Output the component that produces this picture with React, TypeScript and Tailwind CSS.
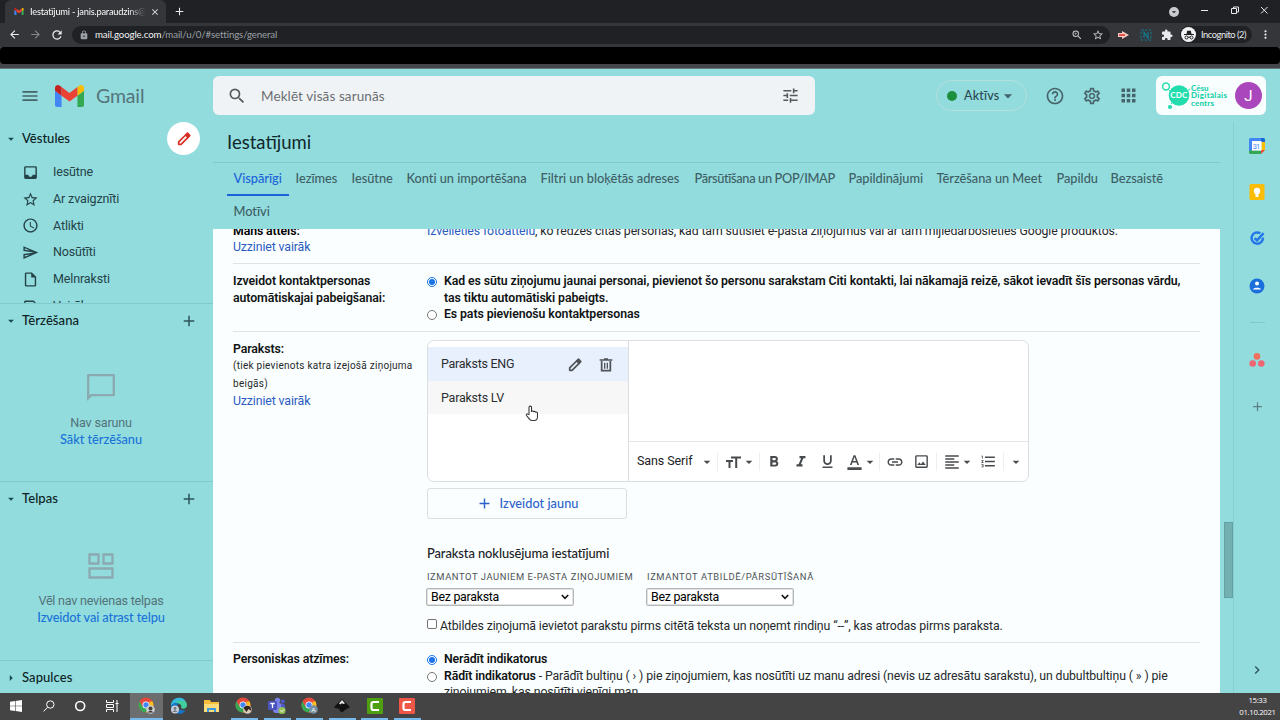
import React from "react";
import {
  MdMenu, MdSearch, MdTune, MdHelpOutline, MdOutlineSettings, MdApps, MdArrowDropDown, MdArrowRight,
  MdInbox, MdStarOutline, MdAccessTime, MdOutlineSend, MdOutlineInsertDriveFile, MdAdd,
  MdFormatBold, MdFormatItalic, MdFormatUnderlined,
  MdFormatColorText, MdLink, MdOutlineImage, MdFormatAlignLeft, MdFormatListNumbered, MdChevronRight,
  MdArrowBack, MdArrowForward, MdRefresh, MdLock, MdClose, MdZoomIn, MdExtension, MdMoreVert, MdLabelOutline,
} from "react-icons/md";

const roboto = "font-[Roboto,'Liberation_Sans',sans-serif]";
const product = "font-[Lato,'Open_Sans',sans-serif]";
const system = "font-[Lato,'Noto_Sans',sans-serif]";

function GmailMark({ className }: { className: string }) {
  return (
    <svg viewBox="52 42 88 66" className={className}>
      <path fill="#4285f4" d="M58 108h14V74L52 59v43c0 3.32 2.69 6 6 6" />
      <path fill="#34a853" d="M120 108h14c3.32 0 6-2.69 6-6V59l-20 15" />
      <path fill="#fbbc04" d="M120 48v26l20-15v-8c0-7.42-8.47-11.65-14.4-7.2" />
      <path fill="#ea4335" d="M72 74V48l24 18 24-18v26L96 92" />
      <path fill="#c5221f" d="M52 51v8l20 15V48l-5.6-4.2c-5.94-4.45-14.4-.22-14.4 7.2" />
    </svg>
  );
}

function Pencil({ className }: { className: string }) {
  return (
    <svg viewBox="0 0 24 24" className={className} fill="none" stroke="currentColor" strokeWidth="2.500" strokeLinejoin="round">
      <path d="M4 20v-3.600L15.200 5.200l3.600 3.600L7.600 20z" />
      <path d="M14.500 6l2.800-2.800 3.500 3.500L18 9.500z" fill="currentColor" />
    </svg>
  );
}

function Trash({ className }: { className: string }) {
  return (
    <svg viewBox="0 0 24 24" className={className} fill="none" stroke="currentColor" strokeWidth="2.600">
      <path d="M5.500 6v14.500h13V6M2.500 4.500h19M9 3h6" />
      <path d="M10 8.500v9M14 8.500v9" strokeWidth="2" />
    </svg>
  );
}

function TabStrip() {
  return (
    <div className="flex h-[23px] shrink-0 items-stretch bg-[#202124] text-[#e8eaed]">
      <div className="ml-[5px] flex w-[161px] items-center rounded-t-[6px] bg-[#35363a] pl-[9px]">
        <GmailMark className="h-[7px] w-[10px]" />
        <span className="ml-[6px] w-[116px] overflow-hidden whitespace-nowrap bg-gradient-to-r from-white from-85% to-transparent bg-clip-text pt-px text-[9.300px] font-medium tracking-[-0.240px] text-transparent">
          Iestatījumi - janis.paraudzins@cdc
        </span>
        <MdClose className="ml-[4px] size-[10px]" />
      </div>
      <MdAdd className="ml-[7px] mt-[5px] size-[13px]" />
      <div className="ml-auto flex items-center">
        <span className="mr-[20px] flex size-[10px] items-center justify-center rounded-full bg-[#c8cacd]">
          <MdArrowDropDown className="size-[10px] text-[#202124]" />
        </span>
        <svg viewBox="0 0 80 12" className="mr-[1px] h-[12px] w-[80px] -translate-y-px" fill="none" stroke="#e8eaed">
          <path d="M2 5.500h7M32.500 3.500h5v5h-5zM34.500 3.500v-1.500h5v5h-1.500M62 2l6.500 6.500M68.500 2L62 8.500" />
        </svg>
      </div>
    </div>
  );
}

function AddressBar() {
  return (
    <div className="flex h-[24px] shrink-0 items-center bg-[#35363a] pb-px text-[#e8eaed]">
      <MdArrowBack className="ml-[8px] size-[13px]" />
      <MdArrowForward className="ml-[8px] size-[13px] text-[#85878b]" />
      <MdRefresh className="ml-[8px] size-[14px]" />
      <div className="ml-[8px] flex h-[18px] w-[1038px] items-center rounded-full bg-[#202124] pl-[7px] pr-[6px]">
        <MdLock className="size-[10px] text-[#9aa0a6]" />
        <span className="ml-[6px] text-[9.700px] tracking-[-0.130px] text-[#9aa0a6]">
          <span className="text-[#f1f3f4]">mail.google.com</span>/mail/u/0/#settings/general
        </span>
        <MdZoomIn className="ml-auto size-[12px] text-[#c8cacd]" />
        <MdStarOutline className="ml-[9px] size-[12px] text-[#c8cacd]" />
      </div>
      <svg viewBox="0 0 12 10" className="ml-[8px] h-[10px] w-[12px]">
        <path d="M0 3h4V1l7 4-7 4V7H0z" fill="#f7c9c5" />
        <path d="M1 5h6" stroke="#e35549" strokeWidth="2" />
      </svg>
      <svg viewBox="0 0 12 12" className="ml-[10px] size-[12px]" fill="none" stroke="#12798c">
        <path d="M1 1h10v10H1z" strokeDasharray="2.500 1.500" />
        <path d="M4 9V3l4 6V3" strokeWidth="1.300" />
      </svg>
      <MdExtension className="ml-[9px] size-[12px]" />
      <div className="ml-[7px] flex h-[17px] w-[72px] items-center rounded-full bg-[#202124]">
        <span className="ml-px flex size-[15px] items-center justify-center rounded-full bg-[#f1f3f4]">
          <svg viewBox="0 0 12 12" className="size-[12px]" fill="none" stroke="#202124">
            <path d="M3.500 5L4.200 1.800h3.600L8.500 5z" fill="#202124" stroke="none" />
            <path d="M1 5.500h10" />
            <circle cx="3.500" cy="8.500" r="1.500" />
            <circle cx="8.500" cy="8.500" r="1.500" />
            <path d="M5 8.200h2" />
          </svg>
        </span>
        <span className="ml-[5px] whitespace-nowrap text-[9.300px] tracking-[-0.450px]">Incognito (2)</span>
      </div>
      <MdMoreVert className="ml-[7px] size-[13px]" />
    </div>
  );
}

function CompanyLogo() {
  return (
    <svg viewBox="0 0 68 32" className="h-[32px] w-[68px] font-[Lato,sans-serif] font-black">
      <g fill="none" stroke="#27dcae">
        <circle cx="5" cy="6.500" r="3.400" strokeWidth="1.500" />
        <path d="M7 9l3 3M10 24l3-3M26 11l3-2" />
      </g>
      <circle cx="18" cy="15.500" r="10.300" fill="#22dcae" />
      <circle cx="9" cy="27" r="2.100" fill="#22dcae" />
      <text x="9.300" y="18.400" fontSize="8" textLength="17" fill="#effffb">CDC</text>
      <g fill="#20d0a8" fontSize="7.900">
        <text x="30" y="10.500" textLength="17.500">Cēsu</text>
        <text x="30" y="18" textLength="36">Digitālais</text>
        <text x="30" y="25.500" textLength="23">centrs</text>
      </g>
    </svg>
  );
}

function Header() {
  return (
    <header className="flex h-[53px] shrink-0 items-center text-[#47646a]">
      <MdMenu className="ml-[20px] size-[20px]" />
      <GmailMark className="ml-[15px] h-[22px] w-[29px]" />
      <span className="ml-[12px] w-[48px] font-[Lato,sans-serif] text-[19.5px] tracking-[-0.15px] text-[#55757b]">Gmail</span>
      <div className="ml-[69px] flex h-[39px] w-[602px] items-center rounded-[6px] bg-[#f0f3f5] text-[#55595d]">
        <MdSearch className="ml-[14px] size-[20px]" />
        <span className={`ml-[14px] pt-px text-[13.5px] tracking-[0.1px] text-[#6b6f73] ${product}`}>Meklēt visās sarunās</span>
        <MdTune className="ml-auto mr-[15px] size-[19px]" />
      </div>
      <div className="ml-[121px] flex h-[31px] w-[91px] items-center rounded-full border border-[#b5dfe0]">
        <span className="ml-[10px] size-[10px] rounded-full bg-[#1e8e3e]" />
        <span className={`ml-[7px] pt-px text-[12.5px] font-medium tracking-[0.2px] text-[#294a50] ${product}`}>Aktīvs</span>
        <MdArrowDropDown className="ml-[-1px] size-[20px]" />
      </div>
      <MdHelpOutline className="ml-[18px] size-[20px]" />
      <MdOutlineSettings className="ml-[17px] size-[20px]" />
      <MdApps className="ml-[16px] size-[21px]" />
      <div className="ml-[17px] flex h-[39px] w-[110px] items-center rounded-[6px] bg-[#f8fdfd] pl-[5px]">
        <CompanyLogo />
        <span className={`ml-[6px] flex size-[27px] items-center justify-center rounded-full bg-[#ab47bc] pt-px text-[15px] text-white ${roboto}`}>J</span>
      </div>
    </header>
  );
}

const folders = [
  { label: "Iesūtne", icon: MdInbox },
  { label: "Ar zvaigznīti", icon: MdStarOutline },
  { label: "Atlikti", icon: MdAccessTime },
  { label: "Nosūtīti", icon: MdOutlineSend },
  { label: "Melnraksti", icon: MdOutlineInsertDriveFile },
  { label: "Vairāk", icon: MdLabelOutline },
];

function SectionTitle({ label, closed, add }: { label: string; closed?: boolean; add?: boolean }) {
  const Arrow = closed ? MdArrowRight : MdArrowDropDown;
  return (
    <div className="flex h-[33px] items-center">
      <Arrow className="ml-[4px] size-[14px] text-[#174a4e]" />
      <span className={`ml-[4px] text-[13px] font-medium tracking-[0.08px] text-[#0e2224] ${product}`}>{label}</span>
      {add && <MdAdd className="ml-auto mr-[15px] size-[18px] text-[#2b5459]" />}
    </div>
  );
}

function Sidebar() {
  return (
    <aside className={`flex w-[213px] shrink-0 flex-col text-[12.600px] ${roboto}`}>
      <div className="h-[181px] shrink-0 overflow-hidden">
        <div className="mb-[4px] flex h-[33px] items-center">
          <MdArrowDropDown className="ml-[4px] size-[14px] text-[#174a4e]" />
          <span className={`ml-[4px] text-[13px] font-medium text-[#0e2224] ${product}`}>Vēstules</span>
          <span className="ml-auto mr-[13px] flex size-[33px] items-center justify-center rounded-full bg-white">
            <Pencil className="size-[16px] text-[#d93025]" />
          </span>
        </div>
        {folders.map(({ label, icon: Icon }) => (
          <div key={label} className="flex h-[26.7px] items-center text-[#244347]">
            <Icon className="ml-[22px] size-[17px]" />
            <span className="ml-[14px] pt-[0.600px] text-[12.500px] tracking-[-0.130px]">{label}</span>
          </div>
        ))}
      </div>
      <div className="h-[178px] shrink-0 border-t border-[#81cacc]">
        <SectionTitle label="Tērzēšana" add />
        <div className="mr-[11px] flex flex-col items-center pt-[36px] leading-4">
          <svg viewBox="0 0 28 28" className="size-[28px]" fill="none" stroke="#8ba9b0" strokeWidth="2.300" strokeLinejoin="round">
            <path d="M1.200 25V2.200h25.600v20H4z" />
            <path d="M0 22v6l6-6z" fill="#8ba9b0" stroke="none" />
          </svg>
          <span className="mt-[14px] tracking-[-0.2px] text-[#527378]">Nav sarunu</span>
          <span className={`text-[12.800px] font-medium tracking-[-0.03px] text-[#1a73d8] ${product}`}>Sākt tērzēšanu</span>
        </div>
      </div>
      <div className="h-[179px] shrink-0 border-t border-[#81cacc]">
        <SectionTitle label="Telpas" add />
        <div className="mr-[11px] flex flex-col items-center pt-[38px] leading-4">
          <svg viewBox="0 0 26 26" className="size-[26px]" fill="none" stroke="#8ba9b0" strokeWidth="2.300">
            <path d="M1.500 1.500h9v9h-9zM15.500 1.500h9v9h-9zM1.500 15.500h23v9h-23z" />
          </svg>
          <span className="mt-[14px] tracking-[-0.240px] text-[#527378]">Vēl nav nevienas telpas</span>
          <span className={`text-[12.800px] font-medium tracking-[-0.14px] text-[#1a73d8] ${product}`}>Izveidot vai atrast telpu</span>
        </div>
      </div>
      <div className="border-t border-[#81cacc]">
        <SectionTitle label="Sapulces" closed />
      </div>
    </aside>
  );
}

const tabs = [
  ["Vispārīgi", "w-[62px] border-b-2 border-[#1a63d8] text-[#1a63d8]"],
  ["Iezīmes", "w-[56px] pb-[2px]"],
  ["Iesūtne", "w-[55px] pb-[2px]"],
  ["Konti un importēšana", "w-[134px] pb-[2px]"],
  ["Filtri un bloķētās adreses", "w-[154px] pb-[2px]"],
  ["Pārsūtīšana un POP/IMAP", "w-[154px] pb-[2px] tracking-[-0.35px]"],
  ["Papildinājumi", "w-[88px] pb-[2px] tracking-[-0.05px]"],
  ["Tērzēšana un Meet", "w-[120px] pb-[2px]"],
  ["Papildu", "w-[54px] pb-[2px]"],
  ["Bezsaistē", "w-[68px] pb-[2px]"],
  ["Motīvi", "w-[50px] pb-[2px]"],
];

function Radio({ checked }: { checked?: boolean }) {
  return (
    <span className={`mt-[4px] flex size-[10px] shrink-0 items-center justify-center rounded-full border bg-white ${checked ? "border-[#1a73e8]" : "border-[#767676]"}`}>
      {checked && <span className="size-[6px] rounded-full bg-[#1a73e8]" />}
    </span>
  );
}

function Option({ checked, children }: { checked?: boolean; children: React.ReactNode }) {
  return (
    <div className="flex gap-[7px]">
      <Radio checked={checked} />
      <div className="whitespace-nowrap">{children}</div>
    </div>
  );
}

function Select() {
  return (
    <span className="-ml-px flex h-[18px] w-[148px] items-center rounded-[2px] border border-[#b4b7b8] bg-white pl-[4px] text-[12.400px] tracking-[-0.28px] text-black shadow-[inset_0_0_0_1px_#e0e2e3]">
      Bez paraksta
      <svg viewBox="0 0 8 6" className="ml-auto mr-[4px] h-[6px] w-[8px]" fill="none" stroke="#111" strokeWidth="1.600">
        <path d="M.8 1L4 4.300 7.200 1" />
      </svg>
    </span>
  );
}

function Caret({ className }: { className: string }) {
  return <MdArrowDropDown className={`size-[16px] shrink-0 ${className}`} />;
}

function Divider({ className }: { className: string }) {
  return <span className={`h-[18px] w-px shrink-0 bg-[#eceef0] ${className}`} />;
}

function SignatureEditor() {
  return (
    <div className="flex h-[142px] w-[602px] overflow-hidden rounded-[7px] border border-[#dcdfe2] bg-white text-[12.500px]">
      <div className="w-[201px] border-r border-[#dcdfe2] pt-[6px] text-[#2b2e31]">
        <div className="flex h-[34px] items-center bg-[#e8f0fe] pl-[13px] pt-px tracking-[-0.26px]">
          Paraksts ENG
          <Pencil className="ml-auto size-[16px] text-[#505458]" />
          <Trash className="ml-[15px] mr-[14px] size-[16px] text-[#505458]" />
        </div>
        <div className="flex h-[33px] items-center bg-[#f7f7f7] pl-[13px] pt-px tracking-[-0.23px]">Paraksts LV</div>
      </div>
      <div className="flex flex-1 flex-col">
        <div className="flex-1" />
        <div className="flex h-[40px] items-center border-t border-[#e3e5e8] pl-[8px] text-[#484b4e]">
          <span className="w-[55px] whitespace-nowrap tracking-[-0.09px] text-[#202124]">Sans Serif</span>
          <Caret className="ml-[7px]" />
          <Divider className="ml-[2px]" />
          <svg viewBox="0 0 15 12" className="ml-[8px] h-[12px] w-[15px]" fill="none" stroke="#484b4e" strokeWidth="2">
            <path d="M5 1.500h10M10.200 1.500V12M0 5h7M3.500 5v7" />
          </svg>
          <Caret className="ml-0" />
          <Divider className="ml-[2px]" />
          <MdFormatBold className="ml-[5px] size-[18px] shrink-0" />
          <MdFormatItalic className="ml-[9px] size-[18px] shrink-0" />
          <MdFormatUnderlined className="ml-[9px] size-[17px] shrink-0" />
          <MdFormatColorText className="ml-[10px] size-[17px] shrink-0" />
          <Caret className="ml-[-1px]" />
          <Divider className="ml-[1px]" />
          <MdLink className="ml-[6px] size-[18px] shrink-0" />
          <MdOutlineImage className="ml-[9px] size-[17px] shrink-0" />
          <Divider className="ml-[6px]" />
          <MdFormatAlignLeft className="ml-[6px] size-[18px] shrink-0" />
          <Caret className="ml-[-2px]" />
          <MdFormatListNumbered className="ml-[5px] size-[17px] shrink-0" />
          <Divider className="ml-[6px]" />
          <Caret className="ml-[4px]" />
        </div>
      </div>
    </div>
  );
}

function Settings() {
  return (
    <main className="flex w-[1007px] shrink-0 flex-col">
      <h1 className={`flex h-[41px] shrink-0 items-center border-b border-[#81c8ca] pl-[14px] pt-px text-[18.500px] text-[#10282b] ${product}`}>Iestatījumi</h1>
      <nav className={`flex h-[66px] shrink-0 flex-wrap content-start pl-[14px] text-[12.800px] font-medium tracking-[-0.030px] text-[#3f6065] ${product}`}>
        {tabs.map(([label, style]) => (
          <span key={label} className={`flex h-[33px] items-center whitespace-nowrap pl-[6.500px] ${style}`}>{label}</span>
        ))}
      </nav>
      <div className={`flex-1 overflow-hidden bg-[#fafefe] px-[20px] text-[12.300px] leading-[16.600px] tracking-[-0.11px] text-[#25292c] ${roboto}`}>
        <section className="-mt-[6.500px] flex h-[41.500px] border-b border-[#dfe3e4]">
          <div className="w-[194px] shrink-0">
            <b className="font-semibold text-black">Mans attēls:</b>
            <div className="text-[#2a5bc0]">Uzziniet vairāk</div>
          </div>
          <div className="whitespace-nowrap">
            <span className="text-[#2a5bc0]">Izvēlieties fotoattēlu</span>, ko redzēs citas personas, kad tām sūtīsiet e-pasta ziņojumus vai ar tām mijiedarbosieties Google produktos.
          </div>
        </section>
        <section className="flex h-[68px] border-b border-[#dfe3e4] pt-[9px] font-semibold tracking-[-0.09px] text-[#101314]">
          <div className="w-[194px] shrink-0">Izveidot kontaktpersonas<br />automātiskajai pabeigšanai:</div>
          <div>
            <Option checked>
              Kad es sūtu ziņojumu jaunai personai, pievienot šo personu sarakstam Citi kontakti, lai nākamajā reizē, sākot ievadīt šīs personas vārdu,
              <br />tas tiktu automātiski pabeigts.
            </Option>
            <Option>Es pats pievienošu kontaktpersonas</Option>
          </div>
        </section>
        <section className="flex h-[311px] border-b border-[#dfe3e4] pt-[8px]">
          <div className="w-[194px] shrink-0 pt-[0.700px]">
            <b className="font-semibold text-[#101314]">Paraksts:</b>
            <div className="whitespace-nowrap text-[10px] leading-[18px] tracking-[0.260px]">(tiek pievienots katra izejošā ziņojuma<br />beigās)</div>
            <div className="text-[#2a5bc0]">Uzziniet vairāk</div>
          </div>
          <div className="relative">
            <SignatureEditor />
            <button className={`mt-[6px] flex h-[31px] w-[200px] items-center justify-center gap-[7px] rounded-[3px] border border-[#dcdfe2] text-[12.700px] font-medium tracking-[0.05px] text-[#2a62c9] ${product}`}>
              <MdAdd className="size-[17px]" />
              <span>Izveidot jaunu</span>
            </button>
            <h2 className={`mt-[26px] text-[12.900px] font-medium tracking-[-0.080px] text-[#202124] ${product}`}>Paraksta noklusējuma iestatījumi</h2>
            <div className="mt-[7px] flex">
              <div className="w-[220px]">
                <div className="mb-[3px] whitespace-nowrap text-[9.400px] tracking-[0.570px] text-[#4e5256]">IZMANTOT JAUNIEM E-PASTA ZIŅOJUMIEM</div>
                <Select />
              </div>
              <div>
                <div className="mb-[3px] whitespace-nowrap text-[9.400px] tracking-[0.6px] text-[#4e5256]">IZMANTOT ATBILDĒ/PĀRSŪTĪŠANĀ</div>
                <Select />
              </div>
            </div>
            <div className="mt-[11px] flex">
              <span className="mr-[3px] mt-[2px] size-[10px] rounded-[2px] border border-[#767676] bg-white" />
              <span className="whitespace-nowrap pt-[0.500px]">Atbildes ziņojumā ievietot parakstu pirms citētā teksta un noņemt rindiņu “--”, kas atrodas pirms paraksta.</span>
            </div>
            <svg viewBox="0 0 24 24" className="absolute left-[96px] top-[64px] size-[18px]" fill="#fff" stroke="#333" strokeWidth="1.400" strokeLinejoin="round">
              <path d="M8 14V4.500a1.700 1.700 0 013.400 0V10c.4-1 2.500-1 3 .3.700-.8 2.300-.5 2.600.7.900-.6 2.300 0 2.300 1.300V17c0 3-1.300 5-4.300 5h-3c-2 0-3-1-4-2.500L4.500 15c-.8-1.200.8-2.600 2-1.500z" />
            </svg>
          </div>
        </section>
        <section className="flex pt-[8px]">
          <div className="w-[194px] shrink-0 font-semibold text-[#101314]">Personiskas atzīmes:</div>
          <div>
            <Option checked><b className="font-semibold text-[#101314]">Nerādīt indikatorus</b></Option>
            <Option>
              <b className="font-semibold text-[#101314]">Rādīt indikatorus</b> - Parādīt bultiņu ( › ) pie ziņojumiem, kas nosūtīti uz manu adresi (nevis uz adresātu sarakstu), un dubultbultiņu ( » ) pie
              <br />ziņojumiem, kas nosūtīti vienīgi man.
            </Option>
          </div>
        </section>
      </div>
    </main>
  );
}

function SidePanel() {
  return (
    <aside className="flex w-[47px] shrink-0 flex-col items-center border-l border-[#84cfd1]">
      <svg viewBox="0 0 16 16" className="mt-[16px] size-[16px]">
        <path d="M1 0h11v3H3v10H0V1z" fill="#4285f4" />
        <path d="M12 0h3l1 1v3h-4z" fill="#1967d2" />
        <path d="M12.500 4H16v8h-3.500z" fill="#fbbc04" />
        <path d="M0 12.500h12V16H1l-1-1z" fill="#34a853" />
        <path d="M12 12h4l-4 4z" fill="#ea4335" />
        <path d="M3 3h9.500v9.500H3z" fill="#fff" />
        <text x="3.800" y="10.700" fontSize="7.500" textLength="7.500" fill="#4285f4" fontFamily="Roboto">31</text>
      </svg>
      <svg viewBox="0 0 16 16" className="mt-[30px] size-[16px]">
        <rect width="15" height="16" x=".5" rx="1.500" fill="#fbbc04" />
        <circle cx="8" cy="7" r="3.200" fill="#fff" />
        <path d="M6.500 9h3v4h-3z" fill="#fff" />
      </svg>
      <svg viewBox="0 0 16 16" className="mt-[31px] size-[15px]" fill="none" stroke="#2377e8" strokeWidth="2.600">
        <path d="M11 2.500A6 6 0 1 0 13.700 7" />
        <path d="M5 7.500L7.500 10 14.500 2.300" />
      </svg>
      <svg viewBox="0 0 16 16" className="mt-[32px] size-[16px]">
        <circle cx="8" cy="8" r="7.500" fill="#1a6fdc" />
        <circle cx="8" cy="5.600" r="2" fill="#fff" />
        <path d="M4 11.500c0-2.500 8-2.500 8 0z" fill="#fff" />
      </svg>
      <span className="mt-[28px] h-px w-[15px] bg-[#81c8ca]" />
      <svg viewBox="0 0 16 16" className="mt-[29px] size-[16px]" fill="#ee6672">
        <circle cx="8" cy="4.400" r="3.300" fill="#f0705f" />
        <circle cx="3.700" cy="11.500" r="3.300" />
        <circle cx="12.300" cy="11.500" r="3.300" />
      </svg>
      <MdAdd className="mt-[31px] size-[15px] text-[#5e7f85]" />
      <MdChevronRight className="mb-[15px] mt-auto size-[16px] text-[#2f5459]" />
    </aside>
  );
}

function Chrome({ children }: { children?: React.ReactNode }) {
  return (
    <svg viewBox="0 0 18 18" className="size-[18px]">
      <circle cx="8" cy="8" r="7.500" fill="#e5493b" />
      <path d="M1.500 4.200A7.500 7.500 0 0 0 8 15.500L11.200 10H4.800z" fill="#35a853" />
      <path d="M14.600 4.600A7.500 7.500 0 0 1 8 15.500L11.500 9.500V4.600z" fill="#fbc116" />
      <circle cx="8" cy="8" r="3.500" fill="#fff" />
      <circle cx="8" cy="8" r="2.700" fill="#4285f4" />
      {children}
    </svg>
  );
}

function Camtasia({ fill }: { fill: string }) {
  return (
    <svg viewBox="0 0 16 16" className="size-[16px]">
      <rect width="16" height="16" rx="1" fill={fill} />
      <path d="M12 4H6.500Q4.500 4 4.500 6v4q0 2 2 2H12" fill="none" stroke="#fff" strokeWidth="2.200" />
    </svg>
  );
}

function TaskItem({ children, open, active }: { children: React.ReactNode; open?: boolean; active?: boolean }) {
  return (
    <div className={`flex w-[32.600px] flex-col items-center ${active ? "bg-[#6c6d6e]" : ""}`}>
      <span className="flex h-[25px] items-center justify-center pt-px">{children}</span>
      <span className={`h-[2px] ${active ? "w-full" : "w-[27px]"} ${open ? "bg-[#76b9ed]" : ""}`} />
    </div>
  );
}

function Taskbar() {
  return (
    <footer className="flex h-[27px] shrink-0 bg-[#444445] text-white">
      <TaskItem>
        <svg viewBox="0 0 12 12" className="size-[12px]" fill="#fff">
          <path d="M0 1.700l5-.7v4.700H0zM5.600.9L12 0v5.700H5.600zM0 6.300h5V11l-5-.7zM5.600 6.300H12V12l-6.400-.9z" />
        </svg>
      </TaskItem>
      <TaskItem>
        <svg viewBox="0 0 12 12" className="size-[12px]" fill="none" stroke="#fff"><circle cx="7.300" cy="4.500" r="3.700" /><path d="M4.500 7.300L.6 11.400" /></svg>
      </TaskItem>
      <TaskItem><svg viewBox="0 0 12 12" className="size-[12px]" fill="none" stroke="#fff" strokeWidth="1.600"><circle cx="5.200" cy="6" r="4.500" /></svg></TaskItem>
      <TaskItem>
        <svg viewBox="0 0 13 12" className="mr-[3px] h-[12px] w-[13px]" fill="none" stroke="#fff"><path d="M.5 0v2.500h7V0M.5 12V9.500h7V12M.5 4.500h7v3h-7zM11 0v12M9.500 3.500h3" /></svg>
      </TaskItem>
      <TaskItem open active>
        <Chrome><circle cx="12.500" cy="12.500" r="4.300" fill="#c9ced0" /><circle cx="12.500" cy="11.500" r="2" fill="#4a4038" /><path d="M9.500 15.500q3-3.500 6 0z" fill="#333" /></Chrome>
      </TaskItem>
      <TaskItem>
        <svg viewBox="0 0 18 18" className="size-[18px]">
          <path d="M1 9a8 8 0 0 1 16-.5c0 3-4 4-6 2.500 1.500-3-1.500-5-4.500-4.500S1.500 9 1 9z" fill="#41cf9d" />
          <path d="M1 9a8 8 0 0 1 15-4C12 2 5 3.500 1 9z" fill="#36b8e5" />
          <path d="M1 9c1-3 5-4.500 8-2-4 1-2.500 7 6.500 6.500A8 8 0 0 1 1 9z" fill="#1673c8" />
          <circle cx="5" cy="12.500" r="4" fill="#c5cdd5" /><circle cx="5" cy="11.500" r="1.400" fill="#6c7884" /><path d="M2.500 15q2.500-3.500 5 0z" fill="#6c7884" />
        </svg>
      </TaskItem>
      <TaskItem>
        <svg viewBox="0 0 16 14" className="h-[14px] w-[16px]"><path d="M0 1h6l1 2h8v10H0z" fill="#f6bd3a" /><path d="M0 5h15v8H0z" fill="#fddc7c" /><path d="M3 13V9h9v4h-2v-2H5v2z" fill="#3f9be0" /></svg>
      </TaskItem>
      <TaskItem open>
        <Chrome><circle cx="12.500" cy="12.500" r="4.300" fill="#d8c8b8" /><path d="M8.500 11q3-4 7-1l1 4-3-2-2 3z" fill="#32261f" /></Chrome>
      </TaskItem>
      <TaskItem open>
        <svg viewBox="0 0 18 18" className="size-[18px]">
          <circle cx="9.500" cy="3.500" r="2.700" fill="#7b83eb" /><circle cx="14.800" cy="4.500" r="2" fill="#5059c9" />
          <rect x="5" y="6" width="9" height="10" rx="3" fill="#7b83eb" /><rect x="13" y="7" width="4" height="7" rx="1.500" fill="#5059c9" />
          <rect y="4" width="9" height="9" rx="1" fill="#4b53bc" /><path d="M2.300 6.500h4.400M4.500 6.500V11" stroke="#fff" strokeWidth="1.300" />
          <circle cx="14" cy="13.500" r="3.600" fill="#92c353" /><path d="M12.200 13.500l1.400 1.400 2.400-2.500" fill="none" stroke="#fff" />
        </svg>
      </TaskItem>
      <TaskItem open>
        <Chrome><circle cx="12.500" cy="12.500" r="4.300" fill="#7691a5" /><text x="10.300" y="15" fontSize="6.500" fill="#fff">A</text></Chrome>
      </TaskItem>
      <TaskItem open>
        <svg viewBox="0 0 16 14" className="h-[14px] w-[16px]"><path d="M8 0l7.500 7.500c1 1.500-2 1.700-3 2.500l-1.500 1-3 2.500L5 11l1-1-5-1c-1-.7-.5-1.500 0-2z" fill="#111" /><path d="M8 1l3 3.500-2 .5-1-1-1.500 1.500L5 4.500z" fill="#e7eaec" /></svg>
      </TaskItem>
      <TaskItem open><Camtasia fill="#4fa011" /></TaskItem>
      <TaskItem open><Camtasia fill="#ee5747" /></TaskItem>
      <div className="ml-auto mr-[4px] flex w-[37px] flex-col items-center pt-[1px] font-['Open_Sans',sans-serif] text-[7.800px] leading-[12px] tracking-[-0.35px]">
        <span>15:33</span>
        <span>01.10.2021</span>
      </div>
    </footer>
  );
}

export default function App() {
  return (
    <div className={`flex h-[720px] w-[1280px] flex-col overflow-hidden ${system}`}>
      <TabStrip />
      <AddressBar />
      <div className="h-[22px] shrink-0 border-b border-[#65797c] bg-[#45464a]">
        <div className="h-[17px] rounded-[4px] bg-black" />
      </div>
      <div className="flex h-[624px] shrink-0 flex-col bg-[#92dcde]">
        <Header />
        <div className="flex min-h-0 flex-1">
          <Sidebar />
          <Settings />
          <div className="flex w-[13px] shrink-0 flex-col items-end pt-[400px]">
            <span className="h-[76px] w-[9px] border border-[#63a0a2] bg-[#73b0b2]" />
          </div>
          <SidePanel />
        </div>
      </div>
      <Taskbar />
    </div>
  );
}
